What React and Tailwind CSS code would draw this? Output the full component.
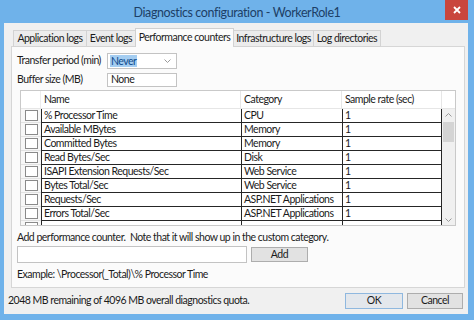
import React from "react";

const rows = [
    {name: "% Processor Time", category: "CPU", rate: "1"},
    {name: "Available MBytes", category: "Memory", rate: "1"},
    {name: "Committed Bytes", category: "Memory", rate: "1"},
    {name: "Read Bytes/Sec", category: "Disk", rate: "1"},
    {name: "ISAPI Extension Requests/Sec", category: "Web Service", rate: "1"},
    {name: "Bytes Total/Sec", category: "Web Service", rate: "1"},
    {name: "Requests/Sec", category: "ASP.NET Applications", rate: "1"},
    {name: "Errors Total/Sec", category: "ASP.NET Applications", rate: "1"},
    {name: "", category: "", rate: ""},
];

const tabs = [
    {label: "Application logs", w: "w-[74px]"},
    {label: "Event logs", w: "w-[50px]"},
    {label: "Performance counters", w: "w-[99px]", active: true},
    {label: "Infrastructure logs", w: "w-[81px]"},
    {label: "Log directories", w: "w-[68px]"},
];

const Chevron = ({up}) => (
    <svg width="7" height="4" viewBox="0 0 7 4" className="block">
        <path d={up ? "M0.5 3.5 L3.5 0.5 L6.5 3.5" : "M0.5 0.5 L3.5 3.5 L6.5 0.5"} fill="none" stroke="#9a9a9a" strokeWidth="1"/>
    </svg>
);

const Row = ({row}) => (
    <div className="flex h-[14px] shrink-0">
        <div className="w-[20px] shrink-0 flex items-center justify-center bg-[#f7f7f7] border-b border-[#e2e2e2]">
            <div className="w-[13px] h-[11px] border border-[#8a8a8a] bg-white"/>
        </div>
        <div className="w-[200px] shrink-0 border-l border-b border-[#262626] bg-white pl-[2px] leading-[13px] overflow-hidden">
            {row.name}
        </div>
        <div className="w-[101px] shrink-0 border-l border-b border-[#262626] bg-white pl-[2px] leading-[13px] overflow-hidden">
            {row.category}
        </div>
        <div className="w-[100px] shrink-0 border-l border-r border-b border-[#262626] bg-white pl-[2px] leading-[13px]">
            {row.rate}
        </div>
    </div>
);

const App = () => {
    return (
        <div className="w-[474px] h-[320px] bg-[#6fb2ea] flex flex-col text-[10.5px] tracking-[-0.5px] text-[#1b1b1b] overflow-hidden whitespace-nowrap"
             style={{fontFamily: "Lato, 'Noto Sans', sans-serif"}}>
            {/* title bar */}
            <div className="relative h-[23px] shrink-0 flex items-center justify-center">
                <span className="text-[12.5px] tracking-[-0.4px] text-[#1d3f66] mt-[3px]">Diagnostics configuration - WorkerRole1</span>
                <div className="absolute right-[6px] top-0 w-[23px] h-[20px] bg-[#c9463d] flex items-center justify-center">
                    <svg width="8" height="8" viewBox="0 0 8 8">
                        <path d="M1 1 L7 7 M7 1 L1 7" stroke="white" strokeWidth="1.8"/>
                    </svg>
                </div>
            </div>

            <div className="ml-[4px] w-[464px] h-[291px] bg-[#f0f0f0] flex flex-col">
                {/* tabs */}
                <div className="mt-[5px] ml-[9px] flex items-end h-[19px] relative z-10 -mb-px">
                    {tabs.map(tab => (
                        <div key={tab.label}
                             className={tab.active
                                 ? `${tab.w} h-[19px] bg-[#fbfbfb] border border-b-0 border-[#d0d0d0] -ml-px flex items-center justify-center`
                                 : `${tab.w} h-[17px] bg-[#ececec] border border-[#d3d3d3] -ml-px first:ml-0 flex items-center justify-center`}>
                            {tab.label}
                        </div>
                    ))}
                </div>

                {/* panel */}
                <div className="ml-[7px] w-[454px] h-[242px] bg-[#fbfbfb] border border-[#d6d6d6] flex flex-col">
                    <div className="mt-[6px] ml-[5px] flex items-center h-[16px]">
                        <span className="w-[90px]">Transfer period (min)</span>
                        <div className="w-[70px] h-[16px] bg-white border border-[#c3c3c3] flex items-center pl-[2px] pr-[5px]">
                            <span className="bg-[#a4cdf1] text-[#0f4a8c] px-[1px] leading-[12px]">Never</span>
                            <span className="ml-auto"><Chevron/></span>
                        </div>
                    </div>
                    <div className="mt-[4px] ml-[5px] flex items-center h-[14px]">
                        <span className="w-[90px]">Buffer size (MB)</span>
                        <div className="w-[70px] h-[14px] bg-white border border-[#c3c3c3] flex items-center pl-[3px]">
                            None
                        </div>
                    </div>

                    {/* counters table */}
                    <div className="mt-[3px] ml-[8px] w-[436px] h-[136px] border border-[#c9c9c9] bg-white flex flex-col">
                        <div className="flex h-[18px] shrink-0 items-center border-b border-[#e6e6e6]">
                            <div className="w-[20px] h-full border-r border-[#ececec]"/>
                            <div className="w-[200px] h-full border-r border-[#e6e6e6] pl-[3px] flex items-center">Name</div>
                            <div className="w-[101px] h-full border-r border-[#e6e6e6] pl-[3px] flex items-center">Category</div>
                            <div className="w-[100px] h-full border-r border-[#e6e6e6] pl-[3px] flex items-center">Sample rate (sec)</div>
                        </div>
                        <div className="flex flex-1 overflow-hidden">
                            <div className="flex flex-col w-[421px] overflow-hidden">
                                {rows.map((row, i) => <Row key={i} row={row}/>)}
                            </div>
                            <div className="w-[13px] bg-[#f0f0f0] flex flex-col items-center">
                                <div className="h-[11px] flex items-center"><Chevron up/></div>
                                <div className="w-[11px] h-[20px] mt-[2px] bg-[#d4d4d4]"/>
                                <div className="flex-1"/>
                                <div className="h-[11px] flex items-center"><Chevron/></div>
                            </div>
                        </div>
                    </div>

                    <div className="mt-[4px] ml-[5px] h-[14px] leading-[14px]">
                        Add performance counter.&nbsp; Note that it will show up in the custom category.
                    </div>
                    <div className="mt-[2px] ml-[5px] flex items-center h-[17px]">
                        <div className="w-[230px] h-[17px] bg-white border border-[#c3c3c3]"/>
                        <div className="ml-[4px] w-[57px] h-[15px] bg-[#e2e2e2] border border-[#adadad] flex items-center justify-center">
                            Add
                        </div>
                    </div>
                    <div className="mt-[5px] ml-[5px] h-[12px] leading-[12px]">
                        Example: \Processor(_Total)\% Processor Time
                    </div>
                </div>

                {/* footer */}
                <div className="flex-1 flex items-center pl-[4px] pr-[5px]">
                    <span>2048 MB remaining of 4096 MB overall diagnostics quota.</span>
                    <div className="ml-auto flex gap-[4px]">
                        <div className="w-[58px] h-[16px] bg-[#e3e7ec] border border-[#8fb8df] flex items-center justify-center">OK</div>
                        <div className="w-[56px] h-[16px] bg-[#e2e2e2] border border-[#adadad] flex items-center justify-center">Cancel</div>
                    </div>
                </div>
            </div>
        </div>
    );
};

export default App;
